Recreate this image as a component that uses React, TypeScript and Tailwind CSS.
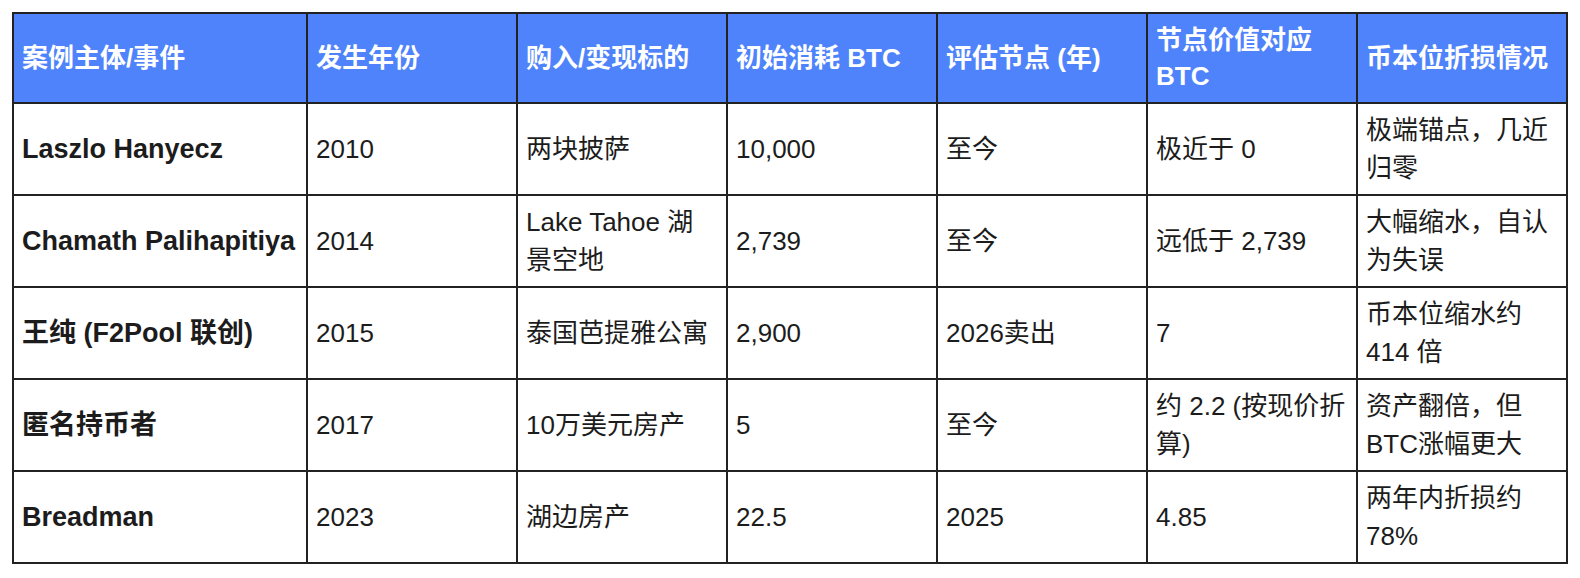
const headers = [
  "案例主体/事件",
  "发生年份",
  "购入/变现标的",
  "初始消耗 BTC",
  "评估节点 (年)",
  "节点价值对应 BTC",
  "币本位折损情况",
];

const rows: string[][] = [
  ["Laszlo Hanyecz", "2010", "两块披萨", "10,000", "至今", "极近于 0", "极端锚点，几近归零"],
  ["Chamath Palihapitiya", "2014", "Lake Tahoe 湖景空地", "2,739", "至今", "远低于 2,739", "大幅缩水，自认为失误"],
  ["王纯 (F2Pool 联创)", "2015", "泰国芭提雅公寓", "2,900", "2026卖出", "7", "币本位缩水约 414 倍"],
  ["匿名持币者", "2017", "10万美元房产", "5", "至今", "约 2.2 (按现价折算)", "资产翻倍，但BTC涨幅更大"],
  ["Breadman", "2023", "湖边房产", "22.5", "2025", "4.85", "两年内折损约 78%"],
];

export default function App() {
  return (
    <div className="min-h-[578px] w-[1580px] bg-white pl-[12px] pt-[12px] font-['Liberation_Sans','Noto_Sans_CJK_SC',sans-serif] text-[26px] text-[#1c1c1c]">
      <div className="grid w-[1556px] grid-cols-[294px_repeat(6,210px)] border-l-2 border-t-2 border-[#222]">
        {headers.map((h) => (
          <div
            key={h}
            className="flex items-center border-b-2 border-r-2 border-[#222] bg-[#4f83fc] px-[8px] py-[8px] font-bold leading-[36px] text-white"
          >
            <span>{h}</span>
          </div>
        ))}
        {rows.map((row) =>
          row.map((cell, i) => (
            <div
              key={row[0] + i}
              className={`flex items-center border-b-2 border-r-2 border-[#222] px-[8px] py-[7px] leading-[38px] ${i === 0 ? "text-[27px] font-bold" : ""}`}
            >
              <span>{cell}</span>
            </div>
          ))
        )}
      </div>
    </div>
  );
}
